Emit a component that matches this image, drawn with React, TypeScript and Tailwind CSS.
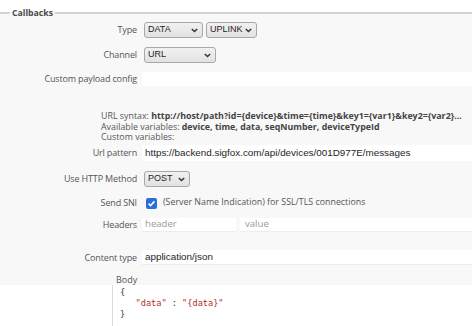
import React from 'react';

const labelFont = "font-['Open_Sans',sans-serif]";
const valueFont = "font-['Liberation_Sans',Arial,sans-serif]";

// Fake select box, like the native one in the screenshot
const Select: React.FC<{ value: string; width: string }> = ({ value, width }) => (
  <div
    className={`${width} ${valueFont} flex h-[16px] items-center justify-between rounded-[3px] border border-[#a8a8a8] bg-gradient-to-b from-[#f1f1f1] to-[#e2e2e2] pl-[3px] pr-[4px] text-[9px] text-[#1e1e1e]`}
  >
    <span>{value}</span>
    <svg width="7" height="5" viewBox="0 0 7 5" className="shrink-0 text-[#333]">
      <polyline points="0.8,0.9 3.5,3.6 6.2,0.9" fill="none" stroke="currentColor" strokeWidth="1.4" />
    </svg>
  </div>
);

const Row: React.FC<{ label: string; className?: string; children?: React.ReactNode }> = ({ label, className = '', children }) => (
  <div className={`flex items-center ${className}`}>
    <div className={`w-[138px] shrink-0 whitespace-nowrap pr-[1px] text-right text-[9px] tracking-[-0.15px] text-[#555] ${labelFont}`}>{label}</div>
    <div className="ml-[4px] flex flex-1 items-center self-stretch">{children}</div>
  </div>
);

const App: React.FC = () => {
  return (
    <div className="h-[326px] w-[474px] overflow-hidden bg-white">
      <fieldset className="mt-[7px] w-[472px] border-t-2 border-[#d4d4d4] bg-[#f8f8f8]">
        <legend className={`ml-[10px] px-[2px] text-[8.7px] font-bold leading-[12px] text-[#4a4a4a] ${labelFont}`}>Callbacks</legend>

        {/* Type */}
        <Row label="Type" className="mt-[3px] h-[16px]">
          <div className="ml-[2px] flex gap-[3px]">
            <Select value="DATA" width="w-[59px]" />
            <Select value="UPLINK" width="w-[51px]" />
          </div>
        </Row>

        {/* Channel */}
        <Row label="Channel" className="mt-[9px] h-[16px]">
          <div className="ml-[2px]">
            <Select value="URL" width="w-[72px]" />
          </div>
        </Row>

        {/* Custom payload config */}
        <Row label="Custom payload config" className="mt-[9px] h-[14px]">
          <div className="h-full flex-1 bg-white" />
        </Row>

        {/* URL help */}
        <div className={`ml-[101px] mt-[25px] text-[8.85px] leading-[10.5px] text-[#555] ${labelFont}`}>
          <div className="whitespace-nowrap">
            URL syntax: <span className="font-bold text-[#444]">http://host/path?id={'{device}'}&amp;time={'{time}'}&amp;key1={'{var1}'}&amp;key2={'{var2}'}...</span>
          </div>
          <div className="whitespace-nowrap">
            Available variables: <span className="font-bold text-[#444]">device, time, data, seqNumber, deviceTypeId</span>
          </div>
          <div>Custom variables:</div>
        </div>

        {/* Url pattern */}
        <Row label="Url pattern" className="mt-[2.5px] h-[16px]">
          <div className={`flex h-full flex-1 items-center bg-white pl-[3px] text-[9.85px] text-[#1e1e1e] ${valueFont}`}>
            https://backend.sigfox.com/api/devices/001D977E/messages
          </div>
        </Row>

        {/* HTTP method */}
        <Row label="Use HTTP Method" className="mt-[10px] h-[16px]">
          <div className="ml-[2px]">
            <Select value="POST" width="w-[46px]" />
          </div>
        </Row>

        {/* SNI */}
        <Row label="Send SNI" className="mt-[10px] h-[12px]">
          <div className="ml-[4px] flex items-center">
            <div className="flex h-[11px] w-[11px] items-center justify-center rounded-[2px] bg-[#2a6fd8]">
              <svg width="9" height="9" viewBox="0 0 9 9">
                <polyline points="1.6,4.6 3.6,6.6 7.4,2.4" fill="none" stroke="white" strokeWidth="1.6" />
              </svg>
            </div>
            <span className={`ml-[6px] text-[8.85px] text-[#555] ${labelFont}`}>
              (Server Name Indication) for SSL/TLS connections
            </span>
          </div>
        </Row>

        {/* Headers */}
        <Row label="Headers" className="mt-[9px] h-[14px]">
          <div className={`flex h-full w-[94px] items-center border-b border-[#ececec] bg-white pl-[3px] text-[9.6px] text-[#9a9a9a] ${labelFont}`}>
            header
          </div>
          <div className={`ml-[4px] flex h-full flex-1 items-center border-b border-[#ececec] bg-white pl-[5px] text-[9.6px] text-[#9a9a9a] ${labelFont}`}>
            value
          </div>
        </Row>

        {/* Content type */}
        <Row label="Content type" className="mt-[18px] h-[15px]">
          <div className={`flex h-full flex-1 items-center border-b border-[#ececec] bg-white pl-[3px] text-[9.85px] text-[#1e1e1e] ${valueFont}`}>
            application/json
          </div>
        </Row>

        {/* Body */}
        <div className={`ml-[116px] mt-[10px] h-[10px] text-[9px] leading-[10px] text-[#555] ${labelFont}`}>Body</div>
      </fieldset>

      {/* Body editor */}
      <div className="ml-[112px] h-[41px] border-l border-[#dcdcdc] bg-white pl-[7px] pt-[2px]">
        <pre className="font-['DejaVu_Sans_Mono',monospace] text-[8.6px] leading-[11px] text-[#333]">
{'{\n'}
{'   '}<span className="text-[#b22b2b]">"data"</span>{' : '}<span className="text-[#b22b2b]">"{'{data}'}"</span>{'\n'}
{'}'}
        </pre>
      </div>
    </div>
  );
};

export default App;
